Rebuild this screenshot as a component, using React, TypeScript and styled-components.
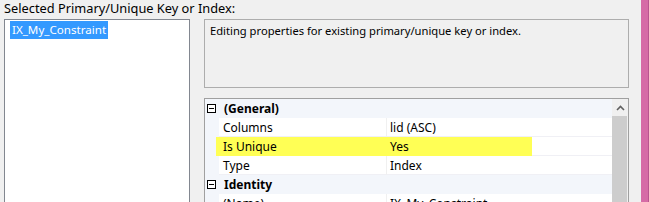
import React from 'react';
import styled, { createGlobalStyle } from 'styled-components';

const Global = createGlobalStyle`
  html, body { margin: 0; padding: 0; background: #f0f0f0; }
  body {
    font-family: "Noto Sans", "Liberation Sans", sans-serif;
    font-size: 12px;
    color: #000;
  }
`;

const Screen = styled.div`
  display: flex;
  width: 649px;
  height: 202px;
  overflow: hidden;
  background: #f0f0f0;
`;

const Main = styled.div`
  flex: 0 0 641px;
  display: flex;
  flex-direction: column;
  padding-left: 4px;
  box-sizing: border-box;
`;

const Caption = styled.div`
  height: 19px;
  line-height: 16px;
  font-size: 12.8px;
  white-space: nowrap;
`;

const Panels = styled.div`
  display: flex;
  gap: 14px;
  flex: 1;
  min-height: 0;
`;

const ListBox = styled.div`
  flex: 0 0 186px;
  box-sizing: border-box;
  border: 1px solid #828790;
  border-bottom: none;
  background: #fff;
  padding: 1px 0 0 5px;
`;

const ListItem = styled.div<{ $selected?: boolean }>`
  display: inline-block;
  height: 18px;
  line-height: 18px;
  padding: 0 2px;
  font-size: 11.6px;
  white-space: nowrap;
  background: ${p => (p.$selected ? '#3399ff' : 'transparent')};
  color: ${p => (p.$selected ? '#fff' : '#000')};
`;

const RightPane = styled.div`
  flex: 0 0 425px;
  display: flex;
  flex-direction: column;
  gap: 10px;
`;

const Description = styled.div`
  height: 69px;
  box-sizing: border-box;
  border: 1px solid #adadad;
  background: #f0f0f0;
  padding: 3px 5px;
  line-height: 16px;
  font-size: 11.2px;
  white-space: nowrap;
`;

const Grid = styled.div`
  flex: 1;
  display: flex;
  border: 1px solid #a0a0a0;
  border-bottom: none;
  background: #fff;
  min-height: 0;
`;

const Rows = styled.div`
  flex: 1;
  display: flex;
  flex-direction: column;
`;

const CategoryRow = styled.div`
  display: flex;
  align-items: center;
  height: 19px;
  flex: 0 0 19px;
  background: #f3f6fb;
  font-weight: bold;
`;

const Toggle = styled.span`
  flex: 0 0 14px;
  display: flex;
  align-items: center;
  padding-left: 2px;
  box-sizing: border-box;
`;

const CategoryLabel = styled.span`
  padding-left: 5px;
  white-space: nowrap;
`;

const PropRow = styled.div`
  position: relative;
  display: flex;
  height: 19px;
  flex: 0 0 19px;
  background: #fff;
`;

const Gutter = styled.span`
  flex: 0 0 14px;
  background: #f3f6fb;
`;

const Cell = styled.span<{ $name?: boolean }>`
  display: flex;
  align-items: center;
  box-sizing: border-box;
  ${p => (p.$name ? 'flex: 0 0 168px; border-right: 1px solid #f0f0f0; padding-left: 4px;' : 'flex: 1; padding-left: 3px;')}
  border-bottom: 1px solid #f0f0f5;
  white-space: nowrap;
  overflow: hidden;
`;

const CellText = styled.span`
  position: relative;
  z-index: 2;
`;

const Highlight = styled.span`
  position: absolute;
  left: 11px;
  top: 0;
  width: 316px;
  height: 19px;
  background: #ffff55;
  z-index: 1;
`;

const ScrollBar = styled.div`
  flex: 0 0 16px;
  display: flex;
  flex-direction: column;
  background: #f0f0f0;
`;

const ScrollButton = styled.div`
  flex: 0 0 17px;
  display: flex;
  align-items: center;
  justify-content: center;
`;

const Thumb = styled.div`
  flex: 1;
  width: 15px;
  background: #cdcdcd;
`;

const SideStrip = styled.div`
  flex: 0 0 8px;
  background: #d66ba6;
  box-shadow: inset -1px 0 0 #b9558f;
`;

const MinusBox = () => (
  <svg width="9" height="9" viewBox="0 0 9 9">
    <rect x="0.5" y="0.5" width="8" height="8" fill="#fff" stroke="#000" />
    <line x1="2" y1="4.5" x2="7" y2="4.5" stroke="#000" />
  </svg>
);

const Chevron = () => (
  <svg width="9" height="6" viewBox="0 0 9 6">
    <polyline points="1,5 4.5,1.5 8,5" fill="none" stroke="#606060" strokeWidth="1.6" />
  </svg>
);

type Prop = { name: string; value: string; highlight?: boolean };

const Property = ({ name, value, highlight }: Prop) => (
  <PropRow>
    <Gutter />
    {highlight && <Highlight />}
    <Cell $name>
      <CellText>{name}</CellText>
    </Cell>
    <Cell>
      <CellText>{value}</CellText>
    </Cell>
  </PropRow>
);

const Category = ({ label }: { label: string }) => (
  <CategoryRow>
    <Toggle>
      <MinusBox />
    </Toggle>
    <CategoryLabel>{label}</CategoryLabel>
  </CategoryRow>
);

export default function App() {
  return (
    <>
      <Global />
      <Screen>
        <Main>
          <Caption>Selected Primary/Unique Key or Index:</Caption>
          <Panels>
            <ListBox>
              <ListItem $selected>IX_My_Constraint</ListItem>
            </ListBox>
            <RightPane>
              <Description>Editing properties for existing primary/unique key or index.</Description>
              <Grid>
                <Rows>
                  <Category label="(General)" />
                  <Property name="Columns" value="lid (ASC)" />
                  <Property name="Is Unique" value="Yes" highlight />
                  <Property name="Type" value="Index" />
                  <Category label="Identity" />
                  <Property name="(Name)" value="IX_My_Constraint" />
                </Rows>
                <ScrollBar>
                  <ScrollButton>
                    <Chevron />
                  </ScrollButton>
                  <Thumb />
                </ScrollBar>
              </Grid>
            </RightPane>
          </Panels>
        </Main>
        <SideStrip />
      </Screen>
    </>
  );
}
